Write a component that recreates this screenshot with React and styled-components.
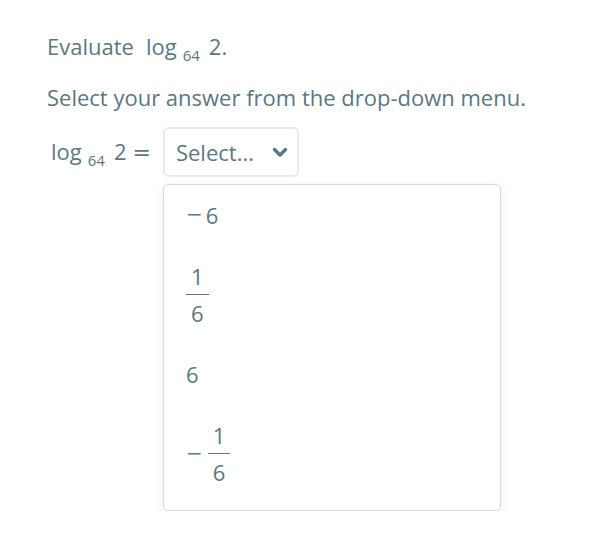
import styled, { createGlobalStyle } from "styled-components";

const GlobalStyle = createGlobalStyle`
  body {
    margin: 0;
    background: #ffffff;
    font-family: "Open Sans", "Noto Sans", sans-serif;
    color: #5b7881;
  }
`;

const Page = styled.div`
  padding: 29px 0 0 47px;
`;

const Prompt = styled.p`
  margin: 0;
  font-size: 22px;
  line-height: 34px;
`;

const Instruction = styled.p`
  margin: 17px 0 0;
  font-size: 22px;
  line-height: 34px;
`;

const Sub = styled.sub`
  font-size: 15px;
  line-height: 1;
  vertical-align: -6px;
  margin: 0 ${(p) => p.right ?? 9}px 0 ${(p) => p.left ?? 6}px;
`;

const Word = styled.span`
  margin-left: ${(p) => p.gap || 0}px;
`;

const AnswerRow = styled.div`
  display: flex;
  align-items: center;
  margin-top: 13px;
  margin-left: 4px;
  font-size: 22px;
`;

const Expr = styled.span`
  line-height: 30px;
  white-space: nowrap;
`;

const Op = styled.span`
  font-family: "DejaVu Sans", sans-serif;
  margin: 0 12px 0 6px;
`;

const SelectBox = styled.div`
  display: flex;
  align-items: center;
  gap: 18px;
  box-sizing: border-box;
  width: 136px;
  height: 50px;
  padding: 0 6px 0 11px;
  border: 2px solid #ebebeb;
  border-radius: 6px;
  background: #fff;
`;

const Menu = styled.div`
  box-sizing: border-box;
  width: 338px;
  height: 327px;
  margin: 7px 0 0 116px;
  padding: 0 0 0 22px;
  border: 1px solid #d9d9d9;
  border-radius: 5px;
  background: #fff;
  box-shadow: 0 2px 8px rgba(0, 0, 0, 0.08);
`;

const Option = styled.div`
  display: flex;
  align-items: center;
  padding: 15px 0 20px;
  font-size: 22px;
  line-height: 30px;
`;

const Minus = styled.span`
  font-family: "DejaVu Sans", sans-serif;
  font-size: 20px;
  margin-right: ${(p) => p.gap}px;
  position: relative;
  top: -1px;
`;

const Frac = styled.span`
  display: inline-flex;
  flex-direction: column;
  align-items: center;
  line-height: 22px;
`;

const Num = styled.span`
  padding: 0 5px;
`;

const Bar = styled.span`
  align-self: stretch;
  height: 1px;
  background: #5b7881;
  margin: 7px 0;
`;

function Fraction({ n, d }) {
  return (
    <Frac>
      <Num>{n}</Num>
      <Bar />
      <Num>{d}</Num>
    </Frac>
  );
}

function Chevron() {
  return (
    <svg width="16" height="11" viewBox="0 0 16 11">
      <path d="M2.5 2.5 L8 8 L13.5 2.5" fill="none" stroke="#5b7881" strokeWidth="3.4" strokeLinecap="round" strokeLinejoin="round" />
    </svg>
  );
}

export default function App() {
  return (
    <>
      <GlobalStyle />
      <Page>
        <Prompt>
          Evaluate<Word gap={12}>log</Word>
          <Sub>64</Sub>2.
        </Prompt>
        <Instruction>Select your answer from the drop-down menu.</Instruction>
        <AnswerRow>
          <Expr>
            log<Sub>64</Sub>2<Op>=</Op>
          </Expr>
          <SelectBox>
            <span>Select...</span>
            <Chevron />
          </SelectBox>
        </AnswerRow>
        <Menu>
          <Option>
            <Minus gap={3}>−</Minus>6
          </Option>
          <Option>
            <Fraction n="1" d="6" />
          </Option>
          <Option>6</Option>
          <Option>
            <Minus gap={5}>−</Minus>
            <Fraction n="1" d="6" />
          </Option>
        </Menu>
      </Page>
    </>
  );
}
